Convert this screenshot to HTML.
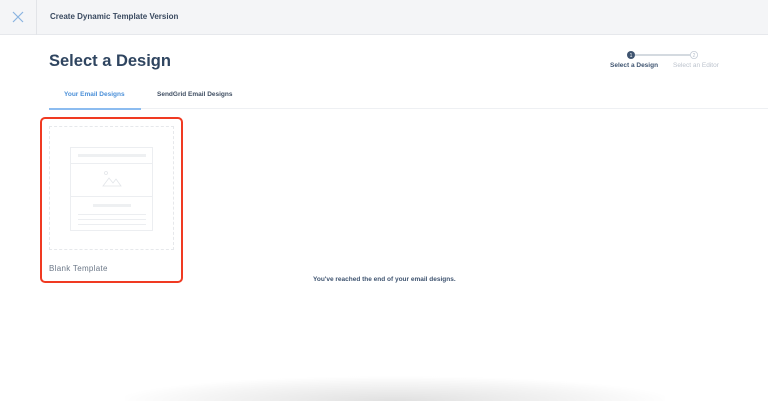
<!DOCTYPE html>
<html style="width:768px;height:401px;overflow:hidden"><head><meta charset="utf-8"><style>
*{margin:0;padding:0;box-sizing:border-box}
body{width:768px;height:401px;overflow:hidden;background:#fff;font-family:"Liberation Sans",Arial,sans-serif;position:relative}
.hdr{position:absolute;left:0;top:0;width:768px;height:35px;background:#f4f5f7;border-bottom:1px solid #e6e8ec}
.div{position:absolute;left:36px;top:0;width:1px;height:35px;background:#e2e4e8}
.t{position:absolute;white-space:nowrap}
</style></head><body>
<div class="hdr"></div>
<div class="div"></div>
<svg class="t" style="left:12px;top:11px" width="12" height="12"><path d="M1 1L11 11M11 1L1 11" stroke="#8ab4e0" stroke-width="1.2"/></svg>
<div class="t" style="left:50px;top:12px;font-size:8px;font-weight:bold;color:#3a4a60">Create Dynamic Template Version</div>
<div class="t" style="left:49px;top:52px;font-size:16.5px;font-weight:bold;color:#2f4560">Select a Design</div>
<svg class="t" style="left:624px;top:49px" width="76" height="12"><circle cx="7" cy="6" r="4" fill="#3f5470"/><text x="7" y="8" font-size="5" fill="#fff" text-anchor="middle" font-family="Liberation Sans">1</text><line x1="11" y1="6" x2="66" y2="6" stroke="#aab4c2" stroke-width="1"/><circle cx="70" cy="6" r="3.6" fill="#fff" stroke="#c5ccd6" stroke-width="0.8"/><text x="70" y="8" font-size="5" fill="#b8c0cc" text-anchor="middle" font-family="Liberation Sans">2</text></svg>
<div class="t" style="left:610px;top:62px;font-size:6.5px;font-weight:bold;color:#3f5470">Select a Design</div>
<div class="t" style="left:673px;top:62px;font-size:6.5px;color:#bcc3cd">Select an Editor</div>
<div class="t" style="left:64px;top:91px;font-size:6.5px;font-weight:bold;color:#4a8fd8">Your Email Designs</div>
<div class="t" style="left:157px;top:91px;font-size:6.5px;font-weight:bold;color:#3f4e62">SendGrid Email Designs</div>
<div style="position:absolute;left:49px;top:108px;width:719px;height:1px;background:#eef0f3"></div>
<div style="position:absolute;left:49px;top:108px;width:92px;height:2px;background:#8cbcf0"></div>
<div style="position:absolute;left:40px;top:117px;width:143px;height:166px;border:2px solid #f03a22;border-radius:5px"></div>
<div style="position:absolute;left:49px;top:126px;width:125px;height:124px;border:1px dashed #e6e8eb"></div>
<div style="position:absolute;left:70px;top:147px;width:83px;height:84px;border:1px solid #eceef1">
 <div style="position:absolute;left:7px;top:6px;width:68px;height:3px;background:#eef0f2"></div>
 <div style="position:absolute;left:0;top:15px;width:81px;height:1px;background:#eceef1"></div>
 <svg style="position:absolute;left:31px;top:22px" width="20" height="18"><circle cx="4" cy="3" r="1.5" fill="none" stroke="#e2e5e9" stroke-width="0.8"/><path d="M1 16L7 8L11 13L14 9L19 16Z" fill="none" stroke="#e2e5e9" stroke-width="0.8"/></svg>
 <div style="position:absolute;left:0;top:48px;width:81px;height:1px;background:#eceef1"></div>
 <div style="position:absolute;left:22px;top:56px;width:38px;height:3px;background:#eef0f2"></div>
 <div style="position:absolute;left:7px;top:66px;width:68px;height:1px;background:#eceef1"></div>
 <div style="position:absolute;left:7px;top:71px;width:68px;height:1px;background:#eceef1"></div>
 <div style="position:absolute;left:7px;top:76px;width:68px;height:1px;background:#eceef1"></div>
</div>
<div class="t" style="left:49px;top:264px;font-size:8px;color:#6c7888;letter-spacing:0.3px">Blank Template</div>
<div class="t" style="left:313px;top:276px;font-size:6.5px;font-weight:bold;color:#3f5470">You've reached the end of your email designs.</div>
<div style="position:absolute;left:125px;top:376px;width:540px;height:25px;background:radial-gradient(ellipse 52% 100% at 50% 100%,rgba(0,0,0,0.12),rgba(0,0,0,0.04) 70%,rgba(0,0,0,0) 100%)"></div>
</body></html>
